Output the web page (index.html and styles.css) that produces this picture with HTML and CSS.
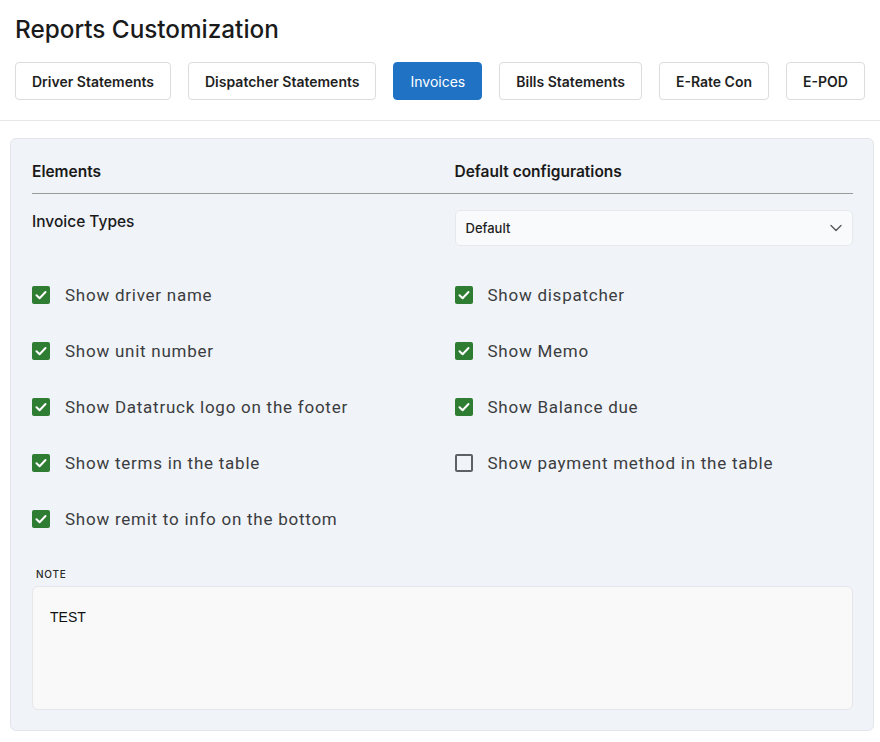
FILE: index.html
```html
<!DOCTYPE html>
<html>
<head>
<meta charset="utf-8">
<link rel="stylesheet" href="styles.css">
</head>
<body>
<div class="top">
  <h1 class="title">Reports Customization</h1>
  <div class="tabs">
    <button class="tab">Driver Statements</button>
    <button class="tab">Dispatcher Statements</button>
    <button class="tab active">Invoices</button>
    <button class="tab">Bills Statements</button>
    <button class="tab">E-Rate Con</button>
    <button class="tab">E-POD</button>
  </div>
</div>
<div class="panel">
  <div class="grid head">
    <div class="hcell">Elements</div>
    <div class="hcell">Default configurations</div>
  </div>
  <div class="grid typerow">
    <div class="tlabel">Invoice Types</div>
    <div class="select">
      <span>Default</span>
      <svg width="14" height="14" viewBox="0 0 14 14"><path d="M2 4.5 L7 9.5 L12 4.5" fill="none" stroke="#555" stroke-width="1.3" stroke-linecap="round" stroke-linejoin="round"/></svg>
    </div>
  </div>
  <div class="grid checks">
    <div class="col">
      <label class="row"><span class="cb on"><svg viewBox="0 0 18 18"><path d="M4.5 9.3 L7.6 12.2 L13.5 6" fill="none" stroke="#fff" stroke-width="2" stroke-linecap="round" stroke-linejoin="round"/></svg></span>Show driver name</label>
      <label class="row"><span class="cb on"><svg viewBox="0 0 18 18"><path d="M4.5 9.3 L7.6 12.2 L13.5 6" fill="none" stroke="#fff" stroke-width="2" stroke-linecap="round" stroke-linejoin="round"/></svg></span>Show unit number</label>
      <label class="row"><span class="cb on"><svg viewBox="0 0 18 18"><path d="M4.5 9.3 L7.6 12.2 L13.5 6" fill="none" stroke="#fff" stroke-width="2" stroke-linecap="round" stroke-linejoin="round"/></svg></span>Show Datatruck logo on the footer</label>
      <label class="row"><span class="cb on"><svg viewBox="0 0 18 18"><path d="M4.5 9.3 L7.6 12.2 L13.5 6" fill="none" stroke="#fff" stroke-width="2" stroke-linecap="round" stroke-linejoin="round"/></svg></span>Show terms in the table</label>
      <label class="row"><span class="cb on"><svg viewBox="0 0 18 18"><path d="M4.5 9.3 L7.6 12.2 L13.5 6" fill="none" stroke="#fff" stroke-width="2" stroke-linecap="round" stroke-linejoin="round"/></svg></span>Show remit to info on the bottom</label>
    </div>
    <div class="col">
      <label class="row"><span class="cb on"><svg viewBox="0 0 18 18"><path d="M4.5 9.3 L7.6 12.2 L13.5 6" fill="none" stroke="#fff" stroke-width="2" stroke-linecap="round" stroke-linejoin="round"/></svg></span>Show dispatcher</label>
      <label class="row"><span class="cb on"><svg viewBox="0 0 18 18"><path d="M4.5 9.3 L7.6 12.2 L13.5 6" fill="none" stroke="#fff" stroke-width="2" stroke-linecap="round" stroke-linejoin="round"/></svg></span>Show Memo</label>
      <label class="row"><span class="cb on"><svg viewBox="0 0 18 18"><path d="M4.5 9.3 L7.6 12.2 L13.5 6" fill="none" stroke="#fff" stroke-width="2" stroke-linecap="round" stroke-linejoin="round"/></svg></span>Show Balance due</label>
      <label class="row"><span class="cb"></span>Show payment method in the table</label>
    </div>
  </div>
  <div class="note-label">NOTE</div>
  <div class="note">TEST</div>
</div>
</body>
</html>
```
FILE: styles.css
```css
* { box-sizing: border-box; }
body {
  margin: 0;
  background: #fff;
  font-family: Inter, "Noto Sans", sans-serif;
  color: #1d1d1f;
}
.top {
  padding: 13px 15px 20px;
  border-bottom: 1px solid #e6e6e6;
}
.title {
  margin: 0;
  font-size: 24.3px;
  line-height: 32px;
  font-weight: 500;
  color: #1a1a1a;
}
.tabs {
  display: flex;
  gap: 17px;
  margin-top: 17px;
}
.tab {
  flex: none;
  white-space: nowrap;
  height: 38px;
  padding: 0 16px;
  border: 1px solid #dcdcdc;
  border-radius: 4px;
  background: #fff;
  font-family: Inter, sans-serif;
  font-size: 14px;
  font-weight: 600;
  color: #1f1f1f;
}
.tab.active {
  background: #1f72c4;
  border-color: #1f72c4;
  color: #fff;
  font-weight: 400;
}
.panel {
  margin: 17px 6px 0 10px;
  background: #f0f3f8;
  border: 1px solid #e2e5ea;
  border-radius: 6px;
  padding: 20px 20px 20px 21px;
}
.grid {
  display: grid;
  grid-template-columns: 1fr 1fr;
  column-gap: 24px;
}
.head {
  border-bottom: 1px solid #9a9a9a;
  padding: 1px 0 9px;
}
.hcell {
  font-size: 15.5px;
  line-height: 24px;
  font-weight: 600;
  color: #1a1a1a;
}
.typerow {
  margin-top: 16px;
  align-items: start;
}
.tlabel {
  font-size: 15.5px;
  line-height: 24px;
  font-weight: 500;
  color: #1a1a1a;
}
.select {
  height: 36px;
  background: #f9fafb;
  border: 1px solid #e6e8eb;
  border-radius: 5px;
  display: flex;
  align-items: center;
  justify-content: space-between;
  padding: 0 9px 0 10px;
  font-size: 13px;
  font-weight: 500;
  color: #1f1f1f;
}
.checks {
  margin-top: 21px;
}
.col {
  display: flex;
  flex-direction: column;
}
.row {
  height: 56px;
  display: flex;
  align-items: center;
  gap: 15px;
  font-family: Roboto, sans-serif;
  font-size: 17px;
  letter-spacing: 0.75px;
  color: #3b3d40;
}
.cb {
  width: 18px;
  height: 18px;
  border-radius: 2px;
  border: 2px solid #5f6063;
  flex: none;
  display: flex;
}
.cb.on {
  background: #2e7d32;
  border: none;
}
.cb svg { width: 18px; height: 18px; }
.note-label {
  margin-top: 20px;
  padding-left: 4px;
  font-size: 10px;
  line-height: 14px;
  font-weight: 500;
  letter-spacing: 0.8px;
  color: #2a2a2a;
}
.note {
  margin-top: 5px;
  height: 124px;
  background: #f9f9f9;
  border: 1px solid #e4e6e9;
  border-radius: 6px;
  padding: 22px 17px;
  font-family: "Liberation Sans", Arial, sans-serif;
  font-size: 14px;
  color: #111;
}
```
